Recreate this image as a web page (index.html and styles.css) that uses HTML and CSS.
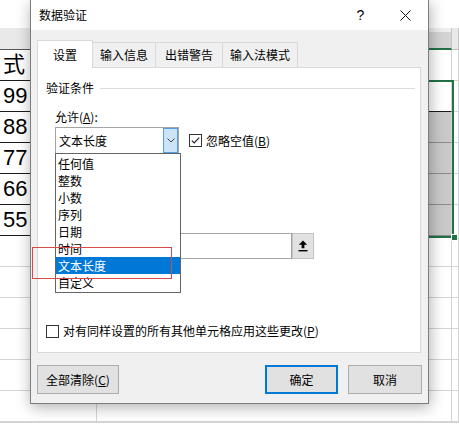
FILE: index.html
```html
<!DOCTYPE html>
<html lang="zh-CN">
<head>
<meta charset="utf-8">
<title>数据验证</title>
<link rel="stylesheet" href="styles.css">
</head>
<body>
<div class="screen">
  <div class="sheet">
    <div class="c top"></div><div class="c top"></div><div class="c top"></div>
    <div class="c hdr hdr-a"></div><div class="c hdr hdr-sel"></div><div class="c hdr"></div>
    <div class="c tb">式</div><div class="c tb"></div><div class="c"></div>
    <div class="c tb">99</div><div class="c tb"></div><div class="c"></div>
    <div class="c tb">88</div><div class="c tb sel"></div><div class="c"></div>
    <div class="c tb">77</div><div class="c tb sel"></div><div class="c"></div>
    <div class="c tb">66</div><div class="c tb sel"></div><div class="c"></div>
    <div class="c tb">55</div><div class="c tb sel"></div><div class="c"></div>
    <div class="c"></div><div class="c"></div><div class="c"></div>
    <div class="c"></div><div class="c"></div><div class="c"></div>
    <div class="c"></div><div class="c"></div><div class="c"></div>
    <div class="c"></div><div class="c"></div><div class="c"></div>
    <div class="c"></div><div class="c"></div><div class="c"></div>
    <div class="c"></div><div class="c"></div><div class="c"></div>
    <div class="c"></div><div class="c"></div><div class="c"></div>
  </div>
  <div class="selection"><span class="handle"></span></div>

  <div class="dialog">
    <div class="titlebar">
      <span class="title">数据验证</span>
      <span class="tbtn help">?</span>
      <span class="tbtn close">
        <svg width="11" height="11" viewBox="0 0 11 11"><path d="M0.5 0.5 L10.5 10.5 M10.5 0.5 L0.5 10.5" stroke="#111" stroke-width="1" fill="none"/></svg>
      </span>
    </div>
    <div class="dbody">
      <div class="tabs">
        <div class="tab on t1">设置</div>
        <div class="tab t2">输入信息</div>
        <div class="tab t3">出错警告</div>
        <div class="tab t4">输入法模式</div>
      </div>
      <div class="panel">
        <div class="group"><span>验证条件</span></div>
        <div class="lbl">允许(<u>A</u>):</div>
        <div class="row1">
          <div class="combo">
            <span class="combo-text">文本长度</span>
            <span class="combo-btn">
              <svg width="8" height="5" viewBox="0 0 8 5"><polyline points="0.5,0.5 4,4 7.5,0.5" stroke="#444" stroke-width="1" fill="none"/></svg>
            </span>
            <ul class="list">
              <li>任何值</li>
              <li>整数</li>
              <li>小数</li>
              <li>序列</li>
              <li>日期</li>
              <li>时间</li>
              <li class="cur">文本长度</li>
              <li>自定义</li>
            </ul>
          </div>
          <div class="chk">
            <span class="box"><svg width="11" height="11" viewBox="0 0 11 11"><polyline points="1.8,5.6 4.2,8 9.2,2.6" stroke="#222" stroke-width="1.2" fill="none"/></svg></span>
            <span>忽略空值(<u>B</u>)</span>
          </div>
        </div>
        <div class="range">
          <div class="input"></div>
          <div class="pick">
            <svg width="10" height="12" viewBox="0 0 10 12"><path d="M5 0.5 L0.8 4.8 H3.6 V8.2 H6.4 V4.8 H9.2 Z" fill="#000"/><rect x="0.5" y="10" width="9" height="1.4" fill="#000"/></svg>
          </div>
        </div>
        <div class="apply">
          <span class="box"></span>
          <span>对有同样设置的所有其他单元格应用这些更改(<u>P</u>)</span>
        </div>
      </div>
      <div class="btns">
        <div class="btn clear">全部清除(<u>C</u>)</div>
        <div class="spacer"></div>
        <div class="btn ok">确定</div>
        <div class="btn cancel">取消</div>
      </div>
    </div>
  </div>

  <div class="annot"></div>
</div>
</body>
</html>
```

FILE: styles.css
```css
* { box-sizing: border-box; }
html, body { margin: 0; padding: 0; background: #fff; }
body { font-family: "Noto Sans CJK SC", "Noto Sans", sans-serif; color: #000; }

.screen { position: relative; width: 459px; height: 441px; overflow: hidden; background: #fff; }

/* spreadsheet behind the dialog */
.sheet {
  display: grid;
  grid-template-columns: 97px 355px 7px;
  grid-template-rows: 28px 22px repeat(12, 31px);
  font-family: "Liberation Sans", "Noto Sans CJK SC", sans-serif;
  font-size: 22px;
}
.c {
  border-right: 1px solid #d4d4d4;
  border-bottom: 1px solid #d4d4d4;
  line-height: 30px;
  padding-left: 3px;
  white-space: nowrap;
  overflow: hidden;
}
.top { border: none; }
.hdr { background: #e9e9e9; border-right-color: #c4c4c4; border-bottom-color: #bdbdbd; }
.hdr-a { border-bottom-color: #555; }
.hdr-sel { background: linear-gradient(#eeeeee 0 4px, #d4d4d4 4px); border-bottom: 2px solid #217346; }
.tb { border-bottom-color: #1a1a1a; }
.sel { background: #c9c9c9; border-bottom-color: #8c8c8c; }

.selection {
  position: absolute;
  left: 96px;
  top: 80px;
  width: 358px;
  height: 158px;
  border: 2px solid #217346;
}
.handle {
  position: absolute;
  right: -6px;
  bottom: -5px;
  width: 7px;
  height: 7px;
  background: #217346;
  border: 1px solid #fff;
}

/* dialog */
.dialog {
  position: absolute;
  left: 30px;
  top: 0;
  width: 399px;
  height: 404px;
  z-index: 2;
  background: #f0f0f0;
  border: 1px solid #7d7d7d;
  border-top: none;
  box-shadow: 1px 3px 14px rgba(0, 0, 0, 0.32);
  font-size: 12px;
  display: flex;
  flex-direction: column;
}
.titlebar { height: 30px; background: #fff; display: flex; align-items: center; }
.title { flex: 1; padding-left: 8px; line-height: 16px; }
.tbtn { width: 45px; height: 30px; display: flex; align-items: center; justify-content: center; }
.help { font-family: "Liberation Sans", sans-serif; font-size: 14px; }

.dbody { flex: 1; padding: 10px 6px 0 6px; display: flex; flex-direction: column; }

.tabs { display: flex; align-items: flex-end; height: 27px; }
.tab {
  height: 25px;
  border: 1px solid #d9d9d9;
  border-bottom: none;
  background: #f0f0f0;
  text-align: center;
  line-height: 24px;
  margin-left: -1px;
  white-space: nowrap;
}
.tab.on {
  height: 28px;
  background: #fff;
  padding-top: 1px;
  line-height: 26px;
  margin-bottom: -1px;
  margin-left: 0;
  position: relative;
  z-index: 2;
}
.t1 { width: 56px; }
.t2 { width: 64px; }
.t3 { width: 68px; }
.t4 { width: 76px; }

.panel {
  height: 286px;
  margin-right: 1px;
  background: #fff;
  border: 1px solid #d9d9d9;
  position: relative;
}

.group { display: flex; align-items: center; margin: 12px 5px 0 8px; line-height: 16px; }
.group::after { content: ""; flex: 1; height: 1px; background: #dcdcdc; margin-left: 6px; }

.lbl { margin: 13px 0 0 17px; line-height: 16px; }

.row1 { display: flex; align-items: center; margin: 2px 0 0 17px; }
.combo {
  position: relative;
  width: 124px;
  height: 27px;
  border: 1px solid #a5a5a5;
  background: #fff;
  display: flex;
}
.combo-text { flex: 1; line-height: 25px; padding-left: 3px; }
.combo-btn {
  width: 15px;
  background: #cce4f7;
  border: 1px solid #569de5;
  display: flex;
  align-items: center;
  justify-content: center;
}
.list {
  position: absolute;
  left: -1px;
  top: 25px;
  width: 126px;
  height: 140px;
  margin: 0;
  padding: 1px 0;
  list-style: none;
  background: #fff;
  border: 1px solid #646464;
  z-index: 5;
}
.list li { height: 17px; line-height: 17px; padding-left: 2px; white-space: nowrap; }
.list li.cur { background: #0078d7; color: #fff; }

.chk { display: flex; align-items: center; margin-left: 10px; line-height: 16px; }
.box {
  width: 13px;
  height: 13px;
  border: 1px solid #333;
  background: #fff;
  margin-right: 4px;
  display: inline-flex;
  align-items: center;
  justify-content: center;
  flex: none;
}

.range { display: flex; height: 26px; margin: 79px 0 0 17px; }
.input { width: 237px; border: 1px solid #a5a5a5; background: #fff; }
.pick {
  width: 22px;
  background: #e1e1e1;
  border: 1px solid #c2c2c2;
  display: flex;
  align-items: center;
  justify-content: center;
}

.apply { display: flex; align-items: center; margin: 64px 0 0 8px; line-height: 16px; }

.btns { display: flex; height: 29px; margin-top: 12px; }
.spacer { flex: 1; }
.btn {
  height: 29px;
  background: #e1e1e1;
  border: 1px solid #adadad;
  text-align: center;
  line-height: 27px;
  white-space: nowrap;
}
.clear { width: 82px; }
.ok { width: 73px; margin-right: 10px; border: 2px solid #0078d7; line-height: 25px; }
.cancel { width: 74px; }

.annot {
  position: absolute;
  left: 32px;
  top: 247px;
  width: 140px;
  height: 32px;
  border: 1px solid #d84a4a;
  z-index: 3;
}
```
